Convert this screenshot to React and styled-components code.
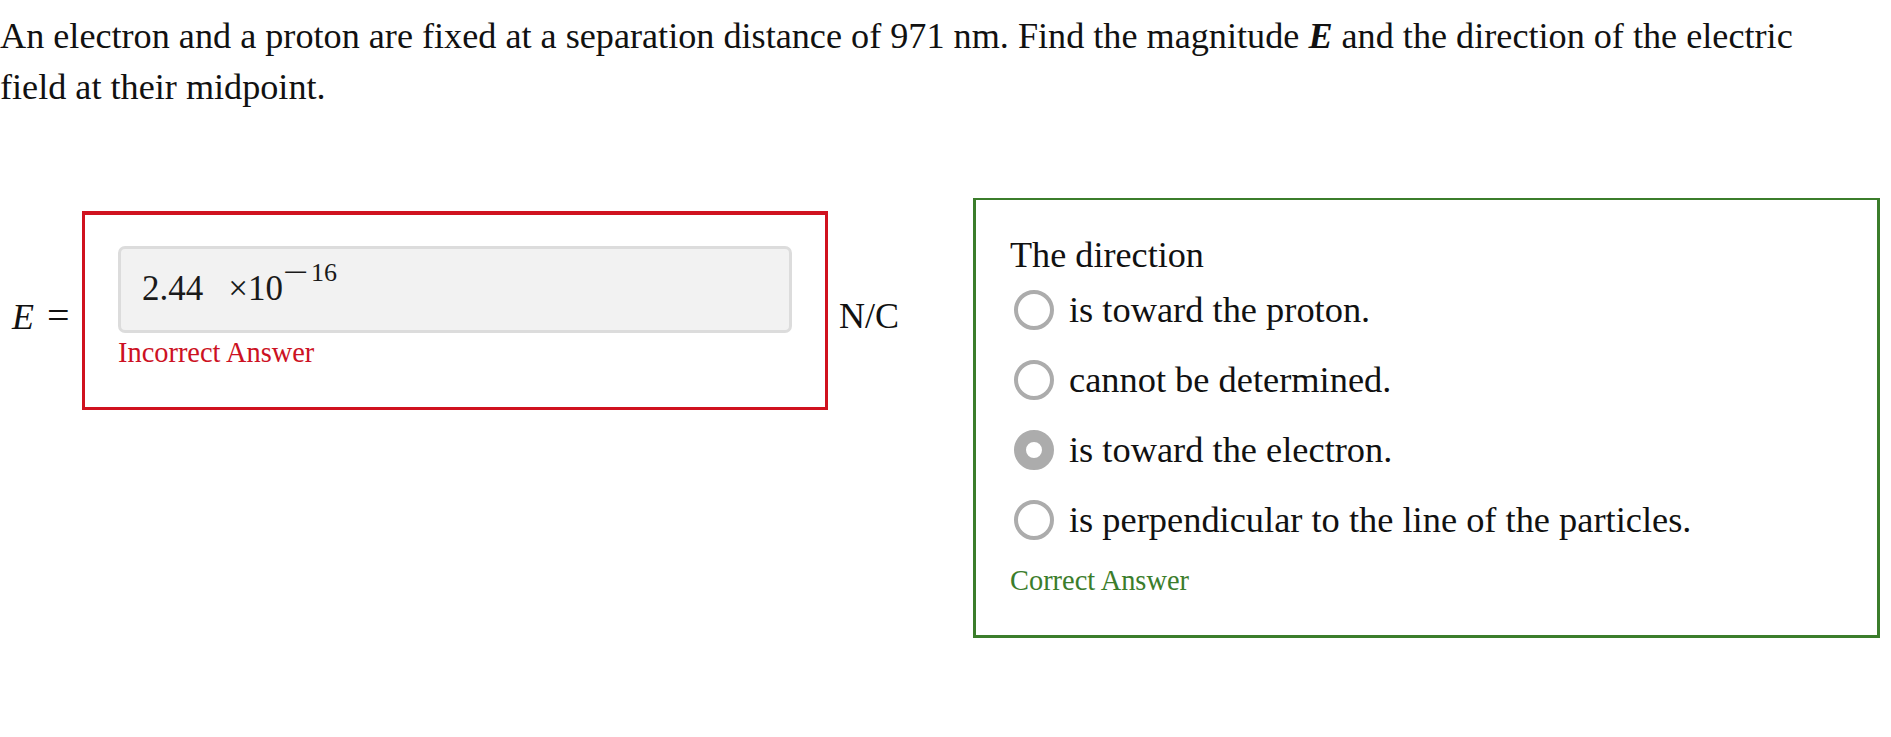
import React from "react";
import styled, { createGlobalStyle } from "styled-components";

const GlobalStyle = createGlobalStyle`
  html, body {
    margin: 0;
    padding: 0;
    background: #ffffff;
  }
  body {
    font-family: "Liberation Serif", "Times New Roman", serif;
    color: #111;
  }
`;

const Page = styled.div`
  width: 1891px;
  height: 737px;
  box-sizing: border-box;
  padding: 11px 11px 0 0;
`;

const Question = styled.p`
  margin: 0;
  max-width: 1840px;
  font-size: 36.2px;
  line-height: 51px;
`;

const Var = styled.i`
  font-weight: ${(props) => (props.bold ? "bold" : "normal")};
`;

const Row = styled.div`
  display: flex;
  align-items: flex-start;
  margin-top: 85px;
`;

const Answer = styled.div`
  display: flex;
  align-items: center;
  margin-top: 13px;
  padding-left: 12px;
`;

const Label = styled.span`
  font-size: 36px;
  padding-top: 10px;
  width: 60px;
  margin-right: 10px;
  white-space: nowrap;
`;

const Eq = styled.span`
  display: inline-block;
  margin-left: 13px;
  font-size: 40px;
`;

const Unit = styled.span`
  font-size: 36px;
  padding-top: 10px;
  margin-left: 11px;
`;

const Frame = styled.div`
  box-sizing: border-box;
  border: 3px solid ${(props) => props.color};
  border-top-width: ${(props) => props.top}px;
`;

const RedBox = styled(Frame)`
  width: 746px;
  height: 199px;
  padding: 31px 33px 0 33px;
`;

const Field = styled.div`
  box-sizing: border-box;
  width: 674px;
  height: 87px;
  background: #f2f2f2;
  border: 3px solid #dcdcdc;
  border-radius: 7px;
  padding: 20px 21px 0;
  font-size: 35px;
  line-height: 40px;
  color: #1a1a1a;
`;

const Times = styled.span`
  margin-left: 25px;
`;

const Sup = styled.span`
  font-size: 26px;
  line-height: 0;
  vertical-align: 19px;
  margin-left: 3px;
`;

const Minus = styled.span`
  display: inline-block;
  width: 20px;
  margin-right: 5px;
  font-size: 30px;
  line-height: 0;
  text-align: center;
  transform: scaleX(1.5) translateY(1px);
`;

const Feedback = styled.div`
  font-size: 28.4px;
  margin-top: ${(props) => props.gap}px;
  color: ${(props) => props.color};
`;

const GreenBox = styled(Frame)`
  margin-left: auto;
  width: 907px;
  height: 440px;
  padding: 35px 34px 0 34px;
`;

const Prompt = styled.div`
  font-size: 36.2px;
  line-height: 40px;
`;

const Option = styled.label`
  display: flex;
  align-items: center;
  height: 70px;
  font-size: 36.4px;
  margin-left: 4px;
`;

const Radio = styled.span`
  box-sizing: border-box;
  flex: none;
  width: 40px;
  height: 40px;
  border-radius: 50%;
  border: ${(props) => (props.checked ? "12px" : "4px")} solid #acacac;
  background: #fff;
  margin-right: 15px;
`;

const options = [
  "is toward the proton.",
  "cannot be determined.",
  "is toward the electron.",
  "is perpendicular to the line of the particles.",
];

export default function App() {
  return (
    <Page>
      <GlobalStyle />
      <Question>
        An electron and a proton are fixed at a separation distance of 971 nm.
        Find the magnitude <Var bold>E</Var> and the direction of the electric
        field at their midpoint.
      </Question>
      <Row>
        <Answer>
          <Label>
            <Var>E</Var>
            <Eq>=</Eq>
          </Label>
          <RedBox color="#d0121f" top={4}>
            <Field>
              2.44<Times>×10</Times>
              <Sup>
                <Minus>−</Minus>16
              </Sup>
            </Field>
            <Feedback color="#cc1123" gap={4}>
              Incorrect Answer
            </Feedback>
          </RedBox>
          <Unit>N/C</Unit>
        </Answer>
        <GreenBox color="#3b7d2b" top={2}>
          <Prompt>The direction</Prompt>
          {options.map((text, i) => (
            <Option key={text}>
              <Radio checked={i === 2} />
              {text}
            </Option>
          ))}
          <Feedback color="#3b7d2b" gap={10}>
            Correct Answer
          </Feedback>
        </GreenBox>
      </Row>
    </Page>
  );
}
